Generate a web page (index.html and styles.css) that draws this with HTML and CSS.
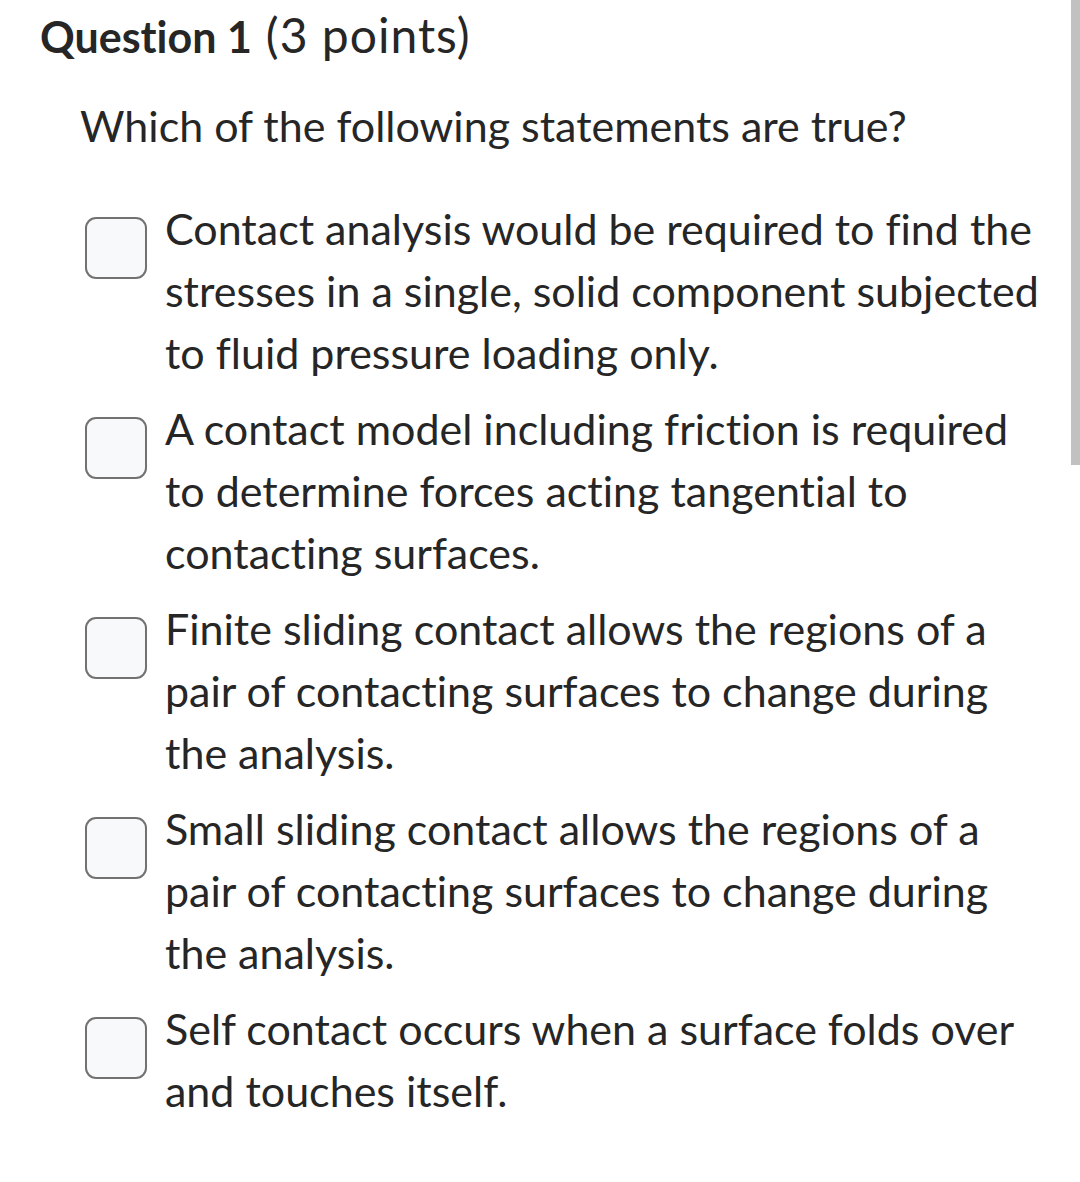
FILE: index.html
```html
<!DOCTYPE html>
<html>
<head>
<meta charset="utf-8">
<link rel="stylesheet" href="styles.css">
</head>
<body>
<div class="page">
  <h1 class="qtitle"><span class="qnum">Question 1</span><span class="qpts">(3 points)</span></h1>
  <div class="qbody">
    <p class="prompt">Which of the following statements are true?</p>
    <ul class="options">
      <li class="opt"><span class="box"></span><span class="label">Contact analysis would be required to find the stresses in a single, solid component subjected to fluid pressure loading only.</span></li>
      <li class="opt"><span class="box"></span><span class="label">A contact model including friction is required to determine forces acting tangential to contacting surfaces.</span></li>
      <li class="opt"><span class="box"></span><span class="label">Finite sliding contact allows the regions of a pair of contacting surfaces to change during the analysis.</span></li>
      <li class="opt"><span class="box"></span><span class="label">Small sliding contact allows the regions of a pair of contacting surfaces to change during the analysis.</span></li>
      <li class="opt"><span class="box"></span><span class="label">Self contact occurs when a surface folds over and touches itself.</span></li>
    </ul>
  </div>
</div>
<div class="scrollbar"></div>
</body>
</html>
```

FILE: styles.css
```css
html, body {
  margin: 0;
  padding: 0;
  background: #ffffff;
}
body {
  font-family: Lato, "Open Sans", sans-serif;
  font-variant-ligatures: none;
  color: #262626;
  width: 1080px;
  height: 1182px;
  overflow: hidden;
  position: relative;
}
.page {
  padding: 5px 0 0 40px;
}
.qtitle {
  margin: 0;
  font-size: 43px;
  line-height: 60px;
  font-weight: 400;
  display: flex;
  align-items: baseline;
}
.qnum {
  font-weight: 700;
}
.qpts {
  margin-left: 14px;
  font-size: 48px;
  letter-spacing: 1px;
}
.qbody {
  padding-left: 40px;
}
.prompt {
  margin: 28px 0 0 0;
  font-size: 43px;
  line-height: 62px;
}
.options {
  list-style: none;
  margin: 41px 0 0 0;
  padding: 0;
}
.opt {
  display: flex;
  align-items: flex-start;
  gap: 18px;
  margin-bottom: 14px;
}
.box {
  flex: none;
  width: 58px;
  height: 58px;
  margin: 19px 0 0 5px;
  border: 2px solid #727272;
  border-radius: 11px;
  background: #f8f9fb;
}
.label {
  font-size: 43px;
  line-height: 62px;
  width: 880px;
}
.scrollbar {
  position: absolute;
  top: 0;
  right: 0;
  width: 9px;
  height: 465px;
  background: #c1c1c1;
}
```
